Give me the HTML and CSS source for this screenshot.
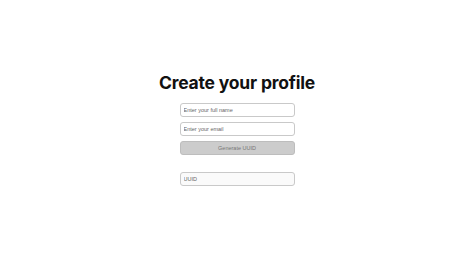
FILE: index.html
```html
<!DOCTYPE html>
<html>
<head>
<meta charset="utf-8">
<link rel="stylesheet" href="styles.css">
</head>
<body>
<main class="page">
  <h1 class="title">Create your profile</h1>
  <form class="form">
    <input class="field" type="text" placeholder="Enter your full name">
    <input class="field" type="email" placeholder="Enter your email">
    <button class="btn" type="button">Generate UUID</button>
    <input class="field uuid" type="text" placeholder="UUID" readonly>
  </form>
</main>
</body>
</html>
```
FILE: styles.css
```css
html, body {
  margin: 0;
  padding: 0;
  background: #ffffff;
}
.page {
  height: 257px;
  display: flex;
  flex-direction: column;
  align-items: center;
  justify-content: center;
  font-family: Inter, "Liberation Sans", sans-serif;
}
.title {
  margin: 0 0 9px;
  font-size: 17.5px;
  font-weight: 700;
  letter-spacing: -0.2px;
  color: #111;
  line-height: 22px;
}
.form {
  display: flex;
  flex-direction: column;
  gap: 5px;
  width: 115px;
}
.field, .btn {
  box-sizing: border-box;
  width: 115px;
  height: 14px;
  border-radius: 3px;
  font-family: "Liberation Sans", sans-serif;
  font-size: 5.5px;
  padding: 0 3px;
  margin: 0;
}
.field {
  border: 1px solid #c9c9c9;
  background: #fff;
  color: #333;
  outline: none;
}
.field::placeholder {
  color: #666;
}
.btn {
  border: 1px solid #bdbdbd;
  background: #cccccc;
  color: #777;
  text-align: center;
}
.uuid {
  margin-top: 12px;
  background: #fafafa;
}
```
